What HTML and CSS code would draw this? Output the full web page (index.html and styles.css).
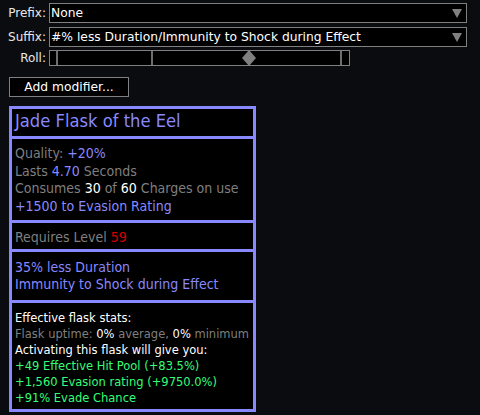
FILE: index.html
```html
<!DOCTYPE html>
<html>
<head>
<meta charset="utf-8">
<link rel="stylesheet" href="styles.css">
</head>
<body>
<div class="page">
  <div class="field field-prefix">
    <div class="label">Prefix:</div>
    <div class="dropdown">
      <span class="dd-text">None</span>
      <svg class="arrow" width="10" height="9" viewBox="0 0 10 9"><polygon points="0,0 10,0 5,9" /></svg>
    </div>
  </div>
  <div class="field field-suffix">
    <div class="label">Suffix:</div>
    <div class="dropdown">
      <span class="dd-text">#% less Duration/Immunity to Shock during Effect</span>
      <svg class="arrow" width="10" height="9" viewBox="0 0 10 9"><polygon points="0,0 10,0 5,9" /></svg>
    </div>
  </div>
  <div class="field field-roll">
    <div class="label">Roll:</div>
    <div class="slider">
      <span class="tick tick-a"></span>
      <span class="tick tick-b"></span>
      <span class="tick tick-c"></span>
      <svg class="knob" width="14" height="16" viewBox="0 0 14 16"><polygon points="7,0 14,8 7,16 0,8" /></svg>
    </div>
  </div>

  <button class="add-btn">Add modifier...</button>

  <div class="card">
    <div class="sec sec-title">Jade Flask of the Eel</div>
    <div class="sec sec-props">
      <div><span class="grey">Quality: </span><span class="blue">+20%</span></div>
      <div><span class="grey">Lasts </span><span class="blue">4.70</span><span class="grey"> Seconds</span></div>
      <div><span class="grey">Consumes </span><span class="white">30</span><span class="grey"> of </span><span class="white">60</span><span class="grey"> Charges on use</span></div>
      <div class="blue">+1500 to Evasion Rating</div>
    </div>
    <div class="sec sec-req">
      <span class="grey">Requires Level </span><span class="red">59</span>
    </div>
    <div class="sec sec-mods">
      <div class="blue">35% less Duration</div>
      <div class="blue">Immunity to Shock during Effect</div>
    </div>
    <div class="sec sec-stats">
      <div class="white">Effective flask stats:</div>
      <div><span class="grey">Flask uptime: </span><span class="white">0%</span><span class="grey"> average, </span><span class="white">0%</span><span class="grey"> minimum</span></div>
      <div class="white">Activating this flask will give you:</div>
      <div class="green">+49 Effective Hit Pool (+83.5%)</div>
      <div class="green">+1,560 Evasion rating (+9750.0%)</div>
      <div class="green">+91% Evade Chance</div>
    </div>
  </div>
</div>
</body>
</html>
```

FILE: styles.css
```css
html, body {
  margin: 0;
  padding: 0;
  background: #0b0c10;
}

body {
  font-family: "DejaVu Sans", "Liberation Sans", sans-serif;
  color: #ffffff;
  width: 480px;
  height: 415px;
  overflow: hidden;
}

.page {
  display: flex;
  flex-direction: column;
  align-items: flex-start;
}

.field {
  display: flex;
  align-items: center;
  gap: 3px;
}

.field-prefix { margin-top: 3px; }
.field-suffix { margin-top: 4px; }
.field-roll { margin-top: 2px; }

.label {
  width: 46px;
  text-align: right;
  font-size: 12px;
  line-height: 18px;
  color: #e8e8e8;
}

.dropdown {
  box-sizing: border-box;
  width: 418px;
  height: 20px;
  border: 1px solid #808080;
  background: #000;
  display: flex;
  align-items: center;
  justify-content: space-between;
  padding-left: 1px;
  padding-right: 4px;
}

.dd-text {
  font-size: 12.3px;
  line-height: 18px;
  color: #ffffff;
  white-space: nowrap;
}

.arrow {
  display: block;
  fill: #808080;
}

.slider {
  box-sizing: border-box;
  width: 301px;
  height: 16px;
  border: 1px solid #808080;
  background: #000;
  position: relative;
}

.tick {
  position: absolute;
  top: 0;
  bottom: 0;
  width: 2px;
  background: #6e6e6e;
}

.tick-a { left: 6px; }
.tick-b { left: 101px; }
.tick-c { left: 290px; }

.knob {
  position: absolute;
  top: -1px;
  left: 192px;
  fill: #808080;
}

.add-btn {
  margin: 10px 0 0 9px;
  box-sizing: border-box;
  width: 120px;
  height: 20px;
  border: 1px solid #808080;
  background: #000;
  color: #ffffff;
  font-family: "DejaVu Sans", "Liberation Sans", sans-serif;
  font-size: 12.3px;
  line-height: 18px;
  padding: 0;
  text-align: center;
}

.card {
  margin: 9px 0 0 9px;
  box-sizing: border-box;
  width: 247px;
  border: 3px solid #8888ff;
  background: #000;
}

.sec {
  padding-left: 3px;
  padding-right: 3px;
  white-space: nowrap;
}

.sec + .sec {
  border-top: 3px solid #8888ff;
}

.sec-title {
  font-family: "DejaVu Sans Condensed", "DejaVu Sans", sans-serif;
  font-stretch: condensed;
  font-size: 18.2px;
  line-height: 20px;
  padding-top: 2px;
  padding-bottom: 5px;
  color: #8888ff;
}

.sec-props, .sec-req, .sec-mods {
  font-family: "DejaVu Sans Condensed", "DejaVu Sans", sans-serif;
  font-stretch: condensed;
  font-size: 14px;
  line-height: 17.5px;
}

.sec-props { padding-top: 6px; padding-bottom: 5px; }
.sec-req { padding-top: 6px; padding-bottom: 2.5px; }
.sec-mods { padding-top: 6.5px; padding-bottom: 6.5px; }

.sec-stats {
  font-size: 11.5px;
  line-height: 16px;
  padding-top: 7px;
  padding-bottom: 3px;
}

.grey { color: #7f7f7f; }
.blue { color: #8888ff; }
.white { color: #ffffff; }
.red { color: #d20000; }
.green { color: #33ff77; }
```
